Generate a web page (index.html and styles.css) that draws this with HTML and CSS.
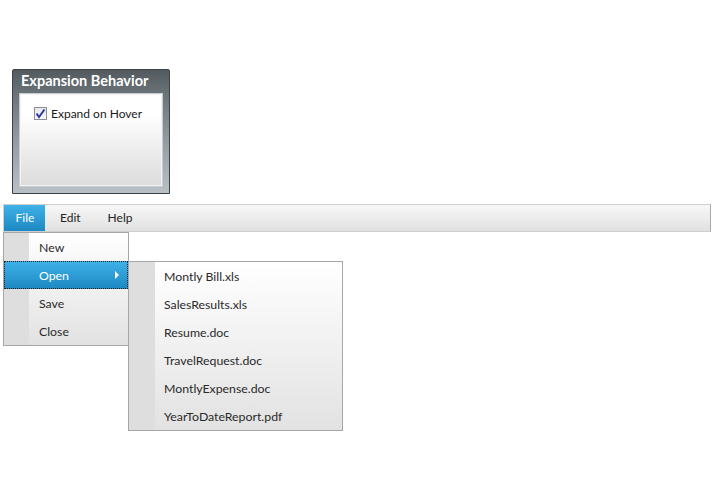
FILE: index.html
```html
<!DOCTYPE html>
<html>
<head>
<meta charset="utf-8">
<link rel="stylesheet" href="styles.css">
</head>
<body>
<div class="page">
  <div class="group">
    <div class="group-title">Expansion Behavior</div>
    <div class="group-body">
      <div class="check">
        <span class="box"><svg width="11" height="11" viewBox="0 0 11 11"><path d="M1.5 5.5 L4 9 L9.5 1.5" fill="none" stroke="#2b3a9c" stroke-width="2"/></svg></span>
        <span>Expand on Hover</span>
      </div>
    </div>
  </div>

  <div class="bar-wrap">
    <div class="bar">
      <div class="top active">File</div>
      <div class="top">Edit</div>
      <div class="top">Help</div>
    </div>
    <div class="panel panel-file">
      <div class="row"><span class="gut"></span><span class="lbl">New</span></div>
      <div class="row hl"><span class="gut"></span><span class="lbl">Open</span><span class="arrow"></span></div>
      <div class="row"><span class="gut"></span><span class="lbl">Save</span></div>
      <div class="row"><span class="gut"></span><span class="lbl">Close</span></div>
    </div>
    <div class="panel panel-sub">
      <div class="row"><span class="gut"></span><span class="lbl">Montly Bill.xls</span></div>
      <div class="row"><span class="gut"></span><span class="lbl">SalesResults.xls</span></div>
      <div class="row"><span class="gut"></span><span class="lbl">Resume.doc</span></div>
      <div class="row"><span class="gut"></span><span class="lbl">TravelRequest.doc</span></div>
      <div class="row"><span class="gut"></span><span class="lbl">MontlyExpense.doc</span></div>
      <div class="row"><span class="gut"></span><span class="lbl">YearToDateReport.pdf</span></div>
    </div>
  </div>
</div>
</body>
</html>
```
FILE: styles.css
```css
html, body {
  margin: 0;
  padding: 0;
  background: #ffffff;
}
body {
  font-family: "Lato", "Open Sans", sans-serif;
  font-size: 12.3px;
  color: #2a2a2a;
}
.page {
  padding-top: 69px;
  height: 500px;
  box-sizing: border-box;
}
.group {
  margin-left: 12px;
  width: 156px;
  height: 123px;
  border: 1px solid #3c4246;
  border-radius: 2px 2px 0 0;
  background: linear-gradient(#525a5f 0%, #6b7479 20%, #959ea5 60%, #b9c0c6 100%);
  display: flex;
  flex-direction: column;
}
.group-title {
  color: #fff;
  font-weight: bold;
  font-size: 14.5px;
  padding: 2px 0 0 8px;
  height: 21px;
  box-sizing: border-box;
  white-space: nowrap;
}
.group-body {
  margin: 3px 7px 0 7px;
  height: 92px;
  border: 1px solid #f4f4f4;
  outline: 1px solid #c8ccd0;
  background: linear-gradient(#ffffff 0%, #ffffff 20%, #dcdcdc 100%);
  padding: 11px 0 0 13px;
  box-sizing: border-box;
}
.check {
  display: flex;
  align-items: center;
  gap: 4px;
  font-size: 12px;
  color: #1a1a1a;
}
.box {
  width: 11px;
  height: 11px;
  border: 1px solid #8a8f96;
  background: linear-gradient(#e6e8ec, #fbfbfc);
  display: inline-block;
  position: relative;
}
.box svg { position: absolute; left: 0; top: 0; }

.bar-wrap {
  position: relative;
  margin: 10px 4px 0 3px;
}
.bar {
  height: 26px;
  border: 1px solid #cfcfcf;
  border-right-color: #a8a8a8;
  background: linear-gradient(#f7f7f7, #e1e1e1);
  display: flex;
}
.top {
  padding: 0 12px 0 15px;
  line-height: 26px;
  font-size: 12px;
  color: #222;
}
.top.active {
  background: linear-gradient(#3fb2e8, #1d88c2);
  color: #fff;
  width: 41px;
  padding: 0 0 0 1px;
  text-align: center;
  box-sizing: border-box;
}
.panel {
  position: absolute;
  z-index: 5;
  border: 1px solid #a6a6a6;
  background: linear-gradient(#ffffff, #e2e2e2);
}
.panel-file {
  left: 0;
  top: 28px;
  width: 124px;
}
.panel-sub {
  left: 125px;
  top: 57px;
  width: 213px;
}
.row {
  display: flex;
  align-items: center;
  height: 28px;
  position: relative;
}
.gut {
  width: 25px;
  align-self: stretch;
  background: #dedede;
  flex: none;
}
.lbl {
  padding-left: 10px;
  color: #2a2a2a;
}
.panel-sub .gut { width: 26px; }
.panel-sub .lbl { padding-left: 9px; }
.row.hl {
  background: linear-gradient(#3fb2e8, #1d88c2);
  outline: 1px dotted #222;
  outline-offset: -1px;
}
.row.hl .gut { background: transparent; }
.row.hl .lbl { color: #fff; }
.arrow {
  position: absolute;
  right: 9px;
  top: 10px;
  width: 0;
  height: 0;
  border-top: 4px solid transparent;
  border-bottom: 4px solid transparent;
  border-left: 4px solid #fff;
}
```
